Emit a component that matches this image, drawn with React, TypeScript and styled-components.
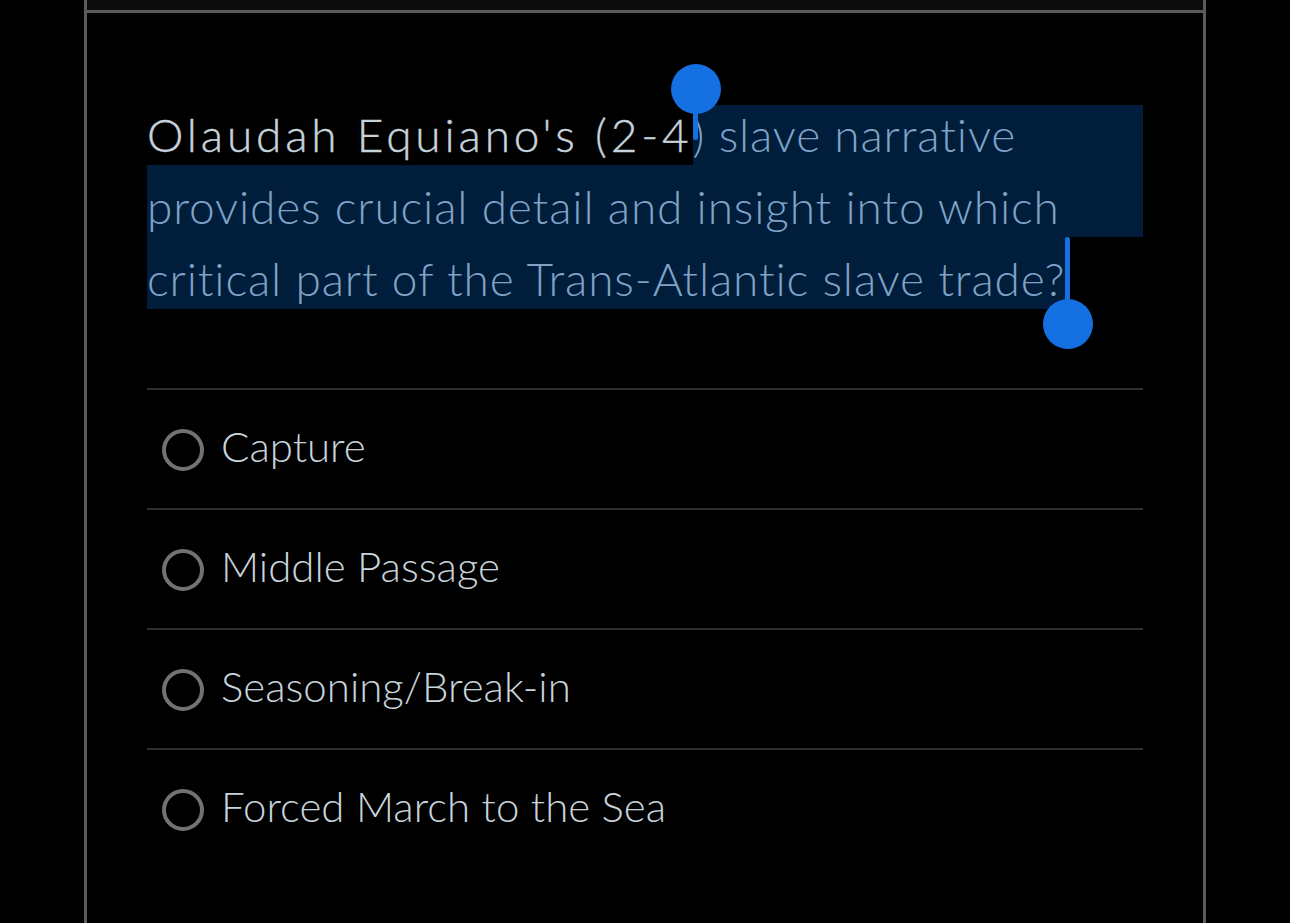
import styled, { createGlobalStyle } from 'styled-components'

const GlobalStyle = createGlobalStyle`
    html, body {
        margin: 0;
        padding: 0;
        background: #000;
        font-family: Lato, "Open Sans", "Liberation Sans", sans-serif;
    }
`

const StyledPage = styled.div`
    min-height: 923px;
    background: #000;
    padding-left: 84px;
    overflow: hidden;
`

const StyledCard = styled.div`
    width: 1122px;
    min-height: 923px;
    box-sizing: border-box;
    border-left: 3px solid #5b5b5b;
    border-right: 3px solid #5b5b5b;
`

const StyledTopStrip = styled.div`
    height: 10px;
    background: #0c0c0c;
    border-bottom: 3px solid #5b5b5b;
`

const StyledBody = styled.div`
    padding: 80px 60px 0 60px;
`

const StyledQuestion = styled.div`
    position: relative;
    font-size: 46px;
    font-weight: 300;
    letter-spacing: 0.85px;
`

const StyledLine = styled.div`
    display: flex;
    height: 72px;
    white-space: nowrap;
    line-height: 60px;
`

const StyledPlain = styled.span`
    color: #c6d3dc;
    letter-spacing: 3.85px;
    padding-top: 12px;
    -webkit-text-stroke: 0.4px #c6d3dc;
`

const StyledSelected = styled.span<{ $fill?: boolean; $top?: number }>`
    color: #7fa2c6;
    padding-top: 12px;
    flex: ${p => (p.$fill ? '1' : '0 0 auto')};
    padding-right: ${p => (p.$fill ? '0' : '2px')};
    background: linear-gradient(transparent ${p => p.$top || 0}px, #001e3b ${p => p.$top || 0}px);
`

const StyledHandle = styled.div<{ $left: number; $top: number; $stemTop: number; $stemHeight: number }>`
    position: absolute;
    left: ${p => p.$left}px;
    top: ${p => p.$top}px;
    width: 50px;
    height: 50px;
    border-radius: 50%;
    background: #1570e2;

    &::after {
        content: '';
        position: absolute;
        left: 22px;
        top: ${p => p.$stemTop}px;
        width: 5px;
        height: ${p => p.$stemHeight}px;
        border-radius: 3px;
        background: #1570e2;
    }
`

const StyledOptions = styled.div`
    margin-top: 79px;
`

const StyledOption = styled.label`
    display: flex;
    align-items: center;
    gap: 17px;
    height: 120px;
    box-sizing: border-box;
    padding-left: 15px;
    border-top: 2px solid #2d2d2d;
    font-size: 42px;
    font-weight: 300;
    color: #c8d4dc;
    cursor: pointer;
`

const StyledOptionText = styled.span`
    padding-bottom: 6px;
`

const StyledRadio = styled.span`
    width: 42px;
    height: 42px;
    box-sizing: border-box;
    border-radius: 50%;
    border: 4px solid #727272;
    flex: 0 0 auto;
    margin-top: 2px;
`

const OPTIONS = ['Capture', 'Middle Passage', 'Seasoning/Break-in', 'Forced March to the Sea']

export default function App() {
    return (
        <>
            <GlobalStyle />
            <StyledPage>
                <StyledCard>
                    <StyledTopStrip />
                    <StyledBody>
                        <StyledQuestion>
                            <StyledLine>
                                <StyledPlain>Olaudah Equiano's (2-4</StyledPlain>
                                <StyledSelected $fill $top={12}>) slave narrative</StyledSelected>
                            </StyledLine>
                            <StyledLine>
                                <StyledSelected $fill>provides crucial detail and insight into which</StyledSelected>
                            </StyledLine>
                            <StyledLine>
                                <StyledSelected>critical part of the Trans-Atlantic slave trade?</StyledSelected>
                            </StyledLine>
                            <StyledHandle $left={524} $top={-29} $stemTop={40} $stemHeight={36} />
                            <StyledHandle $left={896} $top={206} $stemTop={-62} $stemHeight={66} />
                        </StyledQuestion>
                        <StyledOptions>
                            {OPTIONS.map((option, i) => (
                                <StyledOption key={`option-${i}`}>
                                    <StyledRadio />
                                    <StyledOptionText>{option}</StyledOptionText>
                                </StyledOption>
                            ))}
                        </StyledOptions>
                    </StyledBody>
                </StyledCard>
            </StyledPage>
        </>
    )
}
